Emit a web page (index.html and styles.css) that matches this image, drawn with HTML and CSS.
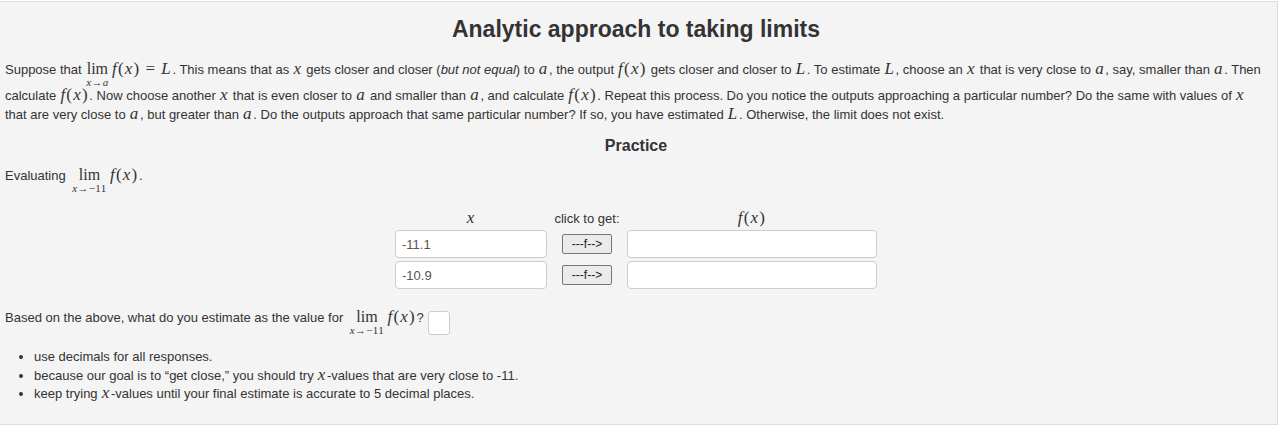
FILE: index.html
```html
<!DOCTYPE html>
<html lang="en">
<head>
<meta charset="utf-8">
<title>Analytic approach to taking limits</title>
<link rel="stylesheet" href="styles.css">
</head>
<body>
<div class="panel">
  <h1 class="title">Analytic approach to taking limits</h1>
  <p class="intro">Suppose that <span class="lim"><span class="lim-op">lim</span><span class="lim-sub"><i>x</i>→<i>a</i></span></span><span class="m"><i>f</i>(<i>x</i>)<span class="rel">=</span><i>L</i></span>. This means that as <i class="m">x</i> gets closer and closer (<em>but not equal</em>) to <i class="m">a</i>, the output <span class="m"><i>f</i>(<i>x</i>)</span> gets closer and closer to <i class="m">L</i>. To estimate <i class="m">L</i>, choose an <i class="m">x</i> that is very close to <i class="m">a</i>, say, smaller than <i class="m">a</i>. Then calculate <span class="m"><i>f</i>(<i>x</i>)</span>. Now choose another <i class="m">x</i> that is even closer to <i class="m">a</i> and smaller than <i class="m">a</i>, and calculate <span class="m"><i>f</i>(<i>x</i>)</span>. Repeat this process. Do you notice the outputs approaching a particular number? Do the same with values of <i class="m">x</i> that are very close to <i class="m">a</i>, but greater than <i class="m">a</i>. Do the outputs approach that same particular number? If so, you have estimated <i class="m">L</i>. Otherwise, the limit does not exist.</p>
  <h2 class="practice">Practice</h2>
  <p class="evaluating">Evaluating <span class="lim wide"><span class="lim-op">lim</span><span class="lim-sub"><i>x</i>→−11</span></span><span class="m"><i>f</i>(<i>x</i>)</span>.</p>
  <div class="calc">
    <div class="head"><i class="m">x</i></div>
    <div class="head">click to get:</div>
    <div class="head"><span class="m"><i>f</i>(<i>x</i>)</span></div>
    <input class="field" type="text" value="-11.1">
    <div class="btn-cell"><button class="fbtn" type="button">---f--&gt;</button></div>
    <input class="field" type="text" value="">
    <input class="field" type="text" value="-10.9">
    <div class="btn-cell"><button class="fbtn" type="button">---f--&gt;</button></div>
    <input class="field" type="text" value="">
  </div>
  <p class="estimate">Based on the above, what do you estimate as the value for <span class="lim wide"><span class="lim-op">lim</span><span class="lim-sub"><i>x</i>→−11</span></span><span class="m"><i>f</i>(<i>x</i>)</span>?<input class="answer" type="text"></p>
  <ul class="notes">
    <li>use decimals for all responses.</li>
    <li>because our goal is to “get close,” you should try <i class="m">x</i>-values that are very close to -11.</li>
    <li>keep trying <i class="m">x</i>-values until your final estimate is accurate to 5 decimal places.</li>
  </ul>
</div>
</body>
</html>
```
FILE: styles.css
```css
html, body {
  margin: 0;
  padding: 0;
  background: #ffffff;
}
body {
  font-family: "Liberation Sans", Arial, sans-serif;
  font-size: 13px;
  line-height: 1.42857;
  color: #333333;
}
.panel {
  box-sizing: border-box;
  width: 1278px;
  height: 424px;
  margin-top: 1px;
  background: #f4f4f4;
  border: 1px solid #dddddd;
  border-left: none;
  padding: 0 10px 0 5px;
}
.title {
  margin: 13px 0 0;
  font-size: 23px;
  line-height: 28px;
  font-weight: bold;
  text-align: center;
  color: #333333;
}
.intro {
  margin: 18px 0 0;
}
.m {
  font-family: "Liberation Serif", "Times New Roman", serif;
  font-size: 17px;
  line-height: 14px;
  letter-spacing: 1.2px;
  padding: 0 0.5px;
}
.m i, i.m {
  font-style: italic;
}
.rel {
  padding: 0 5px;
  font-style: normal;
}
.lim {
  display: inline-flex;
  flex-direction: column;
  align-items: center;
  margin-right: 3px;
  margin-left: 1px;
  font-family: "Liberation Serif", "Times New Roman", serif;
}
.lim.wide {
  margin-left: 3px;
}
.lim-op {
  font-size: 16px;
  line-height: 16px;
}
.lim-sub {
  font-size: 11px;
  line-height: 10px;
  letter-spacing: 0.3px;
}
.practice {
  margin: 12px 0 0;
  font-size: 16px;
  line-height: 20px;
  font-weight: bold;
  text-align: center;
}
.evaluating {
  margin: 11px 0 0;
}
.calc {
  display: grid;
  grid-template-columns: 152px 50px 250px;
  column-gap: 15px;
  row-gap: 3px;
  justify-content: center;
  margin: 18px 0 0;
}
.head {
  text-align: center;
  line-height: 16px;
  white-space: nowrap;
  display: flex;
  justify-content: center;
}
.field {
  box-sizing: border-box;
  height: 28px;
  border: 1px solid #cccccc;
  border-radius: 4px;
  background: #ffffff;
  padding: 0 6px;
  font-family: "Liberation Sans", Arial, sans-serif;
  font-size: 13px;
  color: #555555;
}
.btn-cell {
  display: flex;
  align-items: center;
}
.fbtn {
  box-sizing: border-box;
  width: 50px;
  height: 20px;
  padding: 0;
  border: 1px solid #767676;
  border-radius: 2px;
  background: #ebebeb;
  font-family: "Liberation Sans", Arial, sans-serif;
  font-size: 12px;
  color: #222222;
}
.estimate {
  margin: 20px 0 0;
}
.answer {
  box-sizing: border-box;
  width: 22px;
  height: 24px;
  margin-left: 4px;
  vertical-align: -5px;
  border: 1px solid #cccccc;
  border-radius: 3px;
  background: #ffffff;
  padding: 0;
}
.notes {
  margin: 13px 0 0;
  padding-left: 29px;
}
.notes li {
  line-height: 18.5px;
}
```
